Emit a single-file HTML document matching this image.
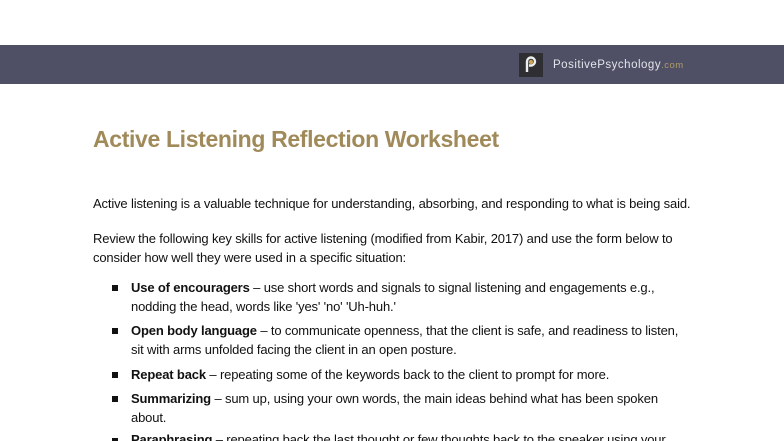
<!DOCTYPE html>
<html><head><meta charset="utf-8"><style>
html,body{margin:0;width:784px;height:441px;overflow:hidden;background:#fff;font-family:"Liberation Sans",sans-serif;position:relative}
.bar{position:absolute;left:0;top:45px;width:784px;height:39px;background:#4f5065}
.logo{position:absolute;left:519px;top:53px;width:24px;height:24px;background:#2f2f33}
.brand{position:absolute;left:553px;top:59px;font-size:11.5px;color:#e4e4ea;letter-spacing:0.5px}
.brand span{color:#b09a66;font-size:9.5px}
h1{position:absolute;left:93px;top:126px;margin:0;font-size:23px;font-weight:bold;color:#a08a5a;letter-spacing:-0.35px}
.t{position:absolute;font-size:13px;color:#111;white-space:nowrap;letter-spacing:-0.15px}
.b{position:absolute;left:112px;width:6px;height:6px;background:#111}
</style></head><body>
<div class="bar"></div>
<div class="logo"><svg width="24" height="24"><path d="M8 19V8.5a4 4 0 1 1 4 4H10" fill="none" stroke="#eee" stroke-width="2.4"/><circle cx="12" cy="9" r="2.2" fill="#c9a55a"/></svg></div>
<div class="brand">PositivePsychology<span>.com</span></div>
<h1>Active Listening Reflection Worksheet</h1>
<div class="t" style="left:93px;top:196px">Active listening is a valuable technique for understanding, absorbing, and responding to what is being said.</div>
<div class="t" style="left:93px;top:231px">Review the following key skills for active listening (modified from Kabir, 2017) and use the form below to</div>
<div class="t" style="left:93px;top:250px">consider how well they were used in a specific situation:</div>
<div class="b" style="top:285px"></div>
<div class="t" style="left:131px;top:280px"><b>Use of encouragers</b> – use short words and signals to signal listening and engagements e.g.,</div>
<div class="t" style="left:131px;top:299px">nodding the head, words like 'yes' 'no' 'Uh-huh.'</div>
<div class="b" style="top:328px"></div>
<div class="t" style="left:131px;top:323px"><b>Open body language</b> – to communicate openness, that the client is safe, and readiness to listen,</div>
<div class="t" style="left:131px;top:342px">sit with arms unfolded facing the client in an open posture.</div>
<div class="b" style="top:372px"></div>
<div class="t" style="left:131px;top:367px"><b>Repeat back</b> – repeating some of the keywords back to the client to prompt for more.</div>
<div class="b" style="top:396px"></div>
<div class="t" style="left:131px;top:391px"><b>Summarizing</b> – sum up, using your own words, the main ideas behind what has been spoken</div>
<div class="t" style="left:131px;top:410px">about.</div>
<div class="b" style="top:438px"></div>
<div class="t" style="left:131px;top:432px"><b>Paraphrasing</b> – repeating back the last thought or few thoughts back to the speaker using your</div>
</body></html>
